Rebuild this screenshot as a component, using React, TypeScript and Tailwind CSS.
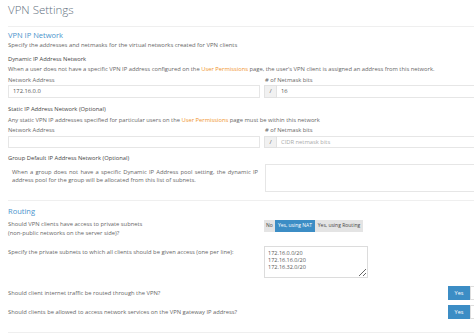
import React from 'react';

function Input({ value, placeholder, className = '' }: { value?: string; placeholder?: string; className?: string }) {
  return (
    <div className={"flex-1 h-full border border-[#e6e6e6] bg-white px-[4px] flex items-center text-[5.8px] " + className}>
      {value ? <span className="text-[#555]">{value}</span> : <span className="text-[#aaa]">{placeholder}</span>}
    </div>
  );
}

function CidrInput({ value, placeholder, h }: { value?: string; placeholder?: string; h: string }) {
  return (
    <div className={"flex " + h}>
      <div className="w-[13px] h-full bg-[#f1f1f1] border border-[#e2e2e2] flex items-center justify-center text-[6px] text-[#666]">/</div>
      <Input value={value} placeholder={placeholder} className="border-l-0" />
    </div>
  );
}

// Yes/No switch; the "No" half sits past the right edge of the window
function Toggle() {
  return (
    <div className="flex h-[14px] text-[5.5px]">
      <div className="w-[22px] bg-[#3c8dc5] text-white flex items-center justify-center">Yes</div>
      <div className="w-[22px] bg-white border border-[#ddd]" />
    </div>
  );
}

export default function App() {
  return (
    <div className="w-[474px] h-[336px] overflow-hidden bg-white font-['Open_Sans',sans-serif] text-[#666]">
      <div className="w-[500px] px-2">
        {/* Title */}
        <div className="h-[27px] border-b border-[#efefef]">
          <h1 className="text-[11.5px] leading-[18px] font-light text-[#5f7080] pt-[1px]">VPN Settings</h1>
        </div>

        {/* VPN IP Network */}
        <h2 className="mt-[2px] h-[13px] leading-[13px] text-[7.5px] text-[#4a93cc]">VPN IP Network</h2>
        <p className="h-[7px] leading-[7px] text-[5.9px]">Specify the addresses and netmasks for the virtual networks created for VPN clients</p>

        <h3 className="mt-[6px] h-[8px] leading-[8px] text-[5.8px] font-medium text-[#444]">Dynamic IP Address Network</h3>
        <p className="mt-[2px] h-[9px] leading-[9px] text-[5.8px] whitespace-nowrap">
          When a user does not have a specific VPN IP address configured on the <span className="text-[#f0952d]">User Permissions</span> page, the user's VPN client is assigned an address from this network.
        </p>
        <div className="mt-[2px] grid grid-cols-[252px_1fr] gap-x-[4px]">
          <div className="h-[8px] leading-[8px] text-[5.8px]">Network Address</div>
          <div className="h-[8px] leading-[8px] text-[5.8px] pl-[1px]">#&nbsp;of Netmask bits</div>
          <div className="mt-[1px] h-[13px] flex"><Input value="172.16.0.0" /></div>
          <div className="mt-[1px]"><CidrInput value="16" h="h-[13px]" /></div>
        </div>

        <h3 className="mt-[7px] h-[8px] leading-[8px] text-[5.8px] font-medium text-[#444]">Static IP Address Network (Optional)</h3>
        <p className="mt-[3px] h-[8px] leading-[8px] text-[5.8px] whitespace-nowrap">
          Any static VPN IP addresses specified for particular users on the <span className="text-[#f0952d]">User Permissions</span> page must be within this network
        </p>
        <div className="mt-[2px] grid grid-cols-[252px_1fr] gap-x-[4px]">
          <div className="h-[9px] leading-[9px] text-[5.8px]">Network Address</div>
          <div className="h-[9px] leading-[9px] text-[5.8px] pl-[1px]">#&nbsp;of Netmask bits</div>
          <div className="mt-[1px] h-[12px] flex"><Input /></div>
          <div className="mt-[1px]"><CidrInput placeholder="CIDR netmask bits" h="h-[12px]" /></div>
        </div>

        <h3 className="mt-[6px] h-[8px] leading-[8px] text-[5.8px] font-medium text-[#444]">Group Default IP Address Network (Optional)</h3>
        <div className="mt-[2px] grid grid-cols-[252px_1fr] gap-x-[4px]">
          <p className="pl-[4px] pr-[2px] pt-[4px] text-[5.8px] leading-[8px] text-justify">
            When a group does not have a specific Dynamic IP Address pool setting, the dynamic IP address pool for the group will be allocated from this list of subnets.
          </p>
          <div className="ml-[1px] h-[28px] border border-[#e6e6e6]" />
        </div>

        {/* Routing */}
        <div className="mt-[8px] border-b border-[#efefef]" />
        <h2 className="mt-[4px] h-[12px] leading-[12px] text-[7.5px] text-[#4a93cc]">Routing</h2>

        <div className="mt-[3px] grid grid-cols-[252px_1fr] gap-x-[4px]">
          <p className="text-[5.8px] leading-[9px]">
            Should VPN clients have access to private subnets<br />(non-public networks on the server side)?
          </p>
          <div className="flex h-[12px] text-[5px]">
            <div className="w-[11px] bg-[#e4e4e4] text-[#444] flex items-center justify-center">No</div>
            <div className="w-[40px] bg-[#3c8dc5] text-white flex items-center justify-center">Yes, using NAT</div>
            <div className="w-[48px] bg-[#e4e4e4] text-[#444] flex items-center justify-center">Yes, using Routing</div>
          </div>
        </div>

        <div className="mt-[8px] grid grid-cols-[252px_1fr] gap-x-[4px]">
          <p className="pt-[2px] text-[5.8px] leading-[8px] whitespace-nowrap">Specify the private subnets to which all clients should be given access (one per line):</p>
          <textarea
            readOnly
            value={"172.16.0.0/20\n172.16.16.0/20\n172.16.32.0/20"}
            className="w-[104px] h-[32px] border border-[#dcdcdc] px-[3px] pt-[3px] text-[5.5px] leading-[7px] text-[#555] outline-none resize"
          />
        </div>

        <div className="mt-[8px] h-[14px] flex items-center justify-between">
          <p className="text-[5.8px] leading-[8px]">Should client internet traffic be routed through the VPN?</p>
          <Toggle />
        </div>
        <div className="mt-[5px] h-[14px] flex items-center justify-between">
          <p className="text-[5.8px] leading-[8px]">Should clients be allowed to access network services on the VPN gateway IP address?</p>
          <Toggle />
        </div>

        <div className="mt-[13px] border-t border-[#efefef]" />
      </div>
    </div>
  );
}
